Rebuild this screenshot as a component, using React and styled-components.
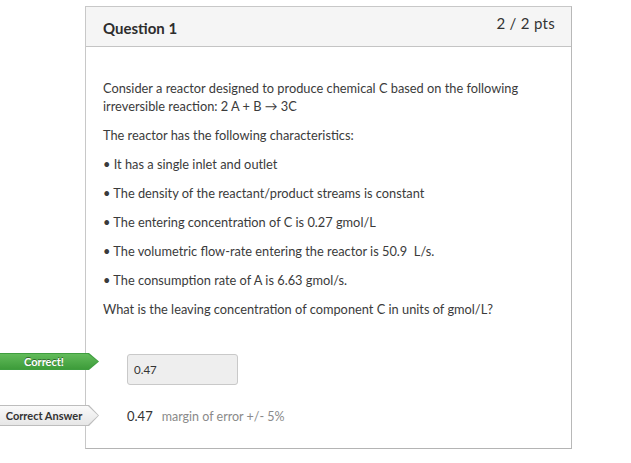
import React from 'react';
import styled, { createGlobalStyle } from 'styled-components';

const GlobalStyle = createGlobalStyle`
  html, body {
    margin: 0;
    padding: 0;
    background: #ffffff;
  }
  body {
    font-family: "Lato", "Helvetica Neue", Helvetica, Arial, sans-serif;
    color: #333333;
  }
`;

const Page = styled.div`
  padding: 6px 0 0 85px;
  width: 631px;
  height: 463px;
  box-sizing: border-box;
`;

const Card = styled.div`
  width: 487px;
  height: 443px;
  box-sizing: border-box;
  border: 1px solid #c8c8c8;
  border-bottom-color: #b4b4b4;
  border-right-color: #b8b8b8;
  background: #ffffff;
`;

const Header = styled.div`
  display: flex;
  justify-content: space-between;
  height: 40px;
  box-sizing: border-box;
  padding: 0 16px 0 17px;
  background: #f5f5f5;
  border-bottom: 1px solid #c4c4c4;
`;

const Title = styled.h2`
  margin: 0;
  padding-top: 12px;
  font-size: 15px;
  font-weight: 700;
  line-height: 18px;
  color: #2d2d2d;
`;

const Points = styled.div`
  padding-top: 8px;
  font-size: 15px;
  letter-spacing: 0.3px;
  line-height: 17px;
  color: #333333;
`;

const Body = styled.div`
  padding: 32px 17px 0;
`;

const Para = styled.p`
  margin: 0 0 11px;
  font-size: 12.8px;
  line-height: 18px;
  color: #3b3b3b;
`;

const Answers = styled.div`
  margin-top: 36px;
  display: flex;
  flex-direction: column;
  gap: 21px;
`;

const AnswerRow = styled.div`
  position: relative;
  display: flex;
  align-items: center;
  padding-left: 24px;
  min-height: 20px;
`;

const Badge = styled.div`
  position: absolute;
  left: -103px;
  top: ${(p) => p.$top}px;
  width: 99px;
  height: ${(p) => p.$h}px;
  clip-path: polygon(0 0, 89px 0, 100% 50%, 89px 100%, 0 100%);
  background: ${(p) => p.$bg};
`;

const BadgeInner = styled.div`
  position: absolute;
  inset: 1px 1px 1px 0;
  clip-path: polygon(0 0, 88px 0, 100% 50%, 88px 100%, 0 100%);
  background: ${(p) => p.$bg};
  display: flex;
  align-items: center;
  justify-content: center;
  padding-right: 10px;
  font-size: 11px;
  font-weight: 700;
  color: ${(p) => p.$color};
  text-shadow: ${(p) => p.$shadow};
`;

const Input = styled.div`
  width: 111px;
  height: 31px;
  box-sizing: border-box;
  border: 1px solid #c9c9c9;
  border-radius: 3px;
  background: #eeeeee;
  padding: 0 6px;
  display: flex;
  align-items: center;
  font-size: 11.5px;
  color: #333333;
`;

const Value = styled.span`
  font-size: 13px;
  color: #333333;
  margin-right: 9px;
`;

const Margin = styled.span`
  font-size: 12.5px;
  color: #8a8a8a;
`;

const paragraphs = [
  'Consider a reactor designed to produce chemical C based on the following irreversible reaction: 2 A + B \u2192 3C',
  'The reactor has the following characteristics:',
  '\u2022 It has a single inlet and outlet',
  '\u2022 The density of the reactant/product streams is constant',
  '\u2022 The entering concentration of C is 0.27 gmol/L',
  '\u2022 The volumetric flow-rate entering the reactor is 50.9\u00a0 L/s.',
  '\u2022 The consumption rate of A is 6.63 gmol/s.',
  'What is the leaving concentration of component C in units of gmol/L?',
];

const App = () => (
  <>
    <GlobalStyle />
    <Page>
      <Card>
        <Header>
          <Title>Question 1</Title>
          <Points>2 / 2 pts</Points>
        </Header>
        <Body>
          {paragraphs.map((text) => (
            <Para key={text}>{text}</Para>
          ))}
          <Answers>
            <AnswerRow>
              <Badge $top={-1} $h={17} $bg="#3f9e3f">
                <BadgeInner
                  $bg="linear-gradient(#62bb5a, #3d9c3a)"
                  $color="#ffffff"
                  $shadow="0 -1px 0 rgba(0,0,0,0.45)"
                >
                  Correct!
                </BadgeInner>
              </Badge>
              <Input>0.47</Input>
            </AnswerRow>
            <AnswerRow>
              <Badge $top={-1} $h={21} $bg="#bdbdbd">
                <BadgeInner
                  $bg="linear-gradient(#fafafa, #e6e6e6)"
                  $color="#333333"
                  $shadow="none"
                >
                  Correct Answer
                </BadgeInner>
              </Badge>
              <Value>0.47</Value>
              <Margin>margin of error +/- 5%</Margin>
            </AnswerRow>
          </Answers>
        </Body>
      </Card>
    </Page>
  </>
);

export default App;
